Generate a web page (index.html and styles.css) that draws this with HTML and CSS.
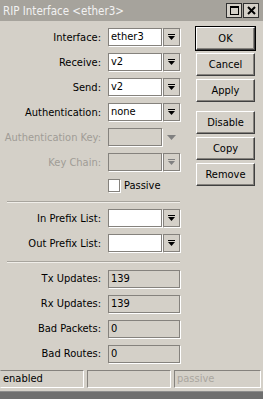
FILE: index.html
```html
<!DOCTYPE html>
<html lang="en">
<head>
    <meta charset="UTF-8">
    <title>RIP Interface</title>
    <link rel="stylesheet" href="styles.css">
</head>
<body>
    <div id="window">
        <div class="titlebar">
            <span class="title">RIP Interface &lt;ether3&gt;</span>
            <div class="tbButtons">
                <span class="tbBtn">
                    <svg width="9" height="9" viewBox="0 0 9 9"><path d="M0 0h9v9h-9z M1 2v6h7v-6z" fill="#000" fill-rule="evenodd"/></svg>
                </span>
                <span class="tbBtn">
                    <svg width="9" height="9" viewBox="0 0 9 9"><path d="M1 1l7 7M8 1l-7 7" stroke="#000" stroke-width="2"/></svg>
                </span>
            </div>
        </div>

        <div class="main">
            <div class="form">
                <div class="group">
                    <div class="row">
                        <span class="lbl">Interface:</span>
                        <div class="combo"><div class="field">ether3</div><div class="drop"><svg width="7" height="7" viewBox="0 0 7 7"><path d="M0 0h7v1h-7z M0 2h7l-3.5 4z"/></svg></div></div>
                    </div>
                    <div class="row">
                        <span class="lbl">Receive:</span>
                        <div class="combo"><div class="field">v2</div><div class="drop"><svg width="7" height="7" viewBox="0 0 7 7"><path d="M0 0h7v1h-7z M0 2h7l-3.5 4z"/></svg></div></div>
                    </div>
                    <div class="row">
                        <span class="lbl">Send:</span>
                        <div class="combo"><div class="field">v2</div><div class="drop"><svg width="7" height="7" viewBox="0 0 7 7"><path d="M0 0h7v1h-7z M0 2h7l-3.5 4z"/></svg></div></div>
                    </div>
                    <div class="row">
                        <span class="lbl">Authentication:</span>
                        <div class="combo"><div class="field">none</div><div class="drop"><svg width="7" height="7" viewBox="0 0 7 7"><path d="M0 0h7v1h-7z M0 2h7l-3.5 4z"/></svg></div></div>
                    </div>
                    <div class="row">
                        <span class="lbl disabled">Authentication Key:</span>
                        <div class="combo"><div class="field off"></div><div class="drop flat"><svg width="9" height="5" viewBox="0 0 9 5"><path d="M0 0h9l-4.5 5z" fill="#808080"/></svg></div></div>
                    </div>
                    <div class="row">
                        <span class="lbl disabled">Key Chain:</span>
                        <div class="combo"><div class="field off"></div><div class="drop"><svg width="7" height="7" viewBox="0 0 7 7"><path d="M0 0h7v1h-7z M0 2h7l-3.5 4z" fill="#808080"/></svg></div></div>
                    </div>
                    <div class="checkRow">
                        <span class="check"></span>
                        <span>Passive</span>
                    </div>
                </div>

                <div class="sep"></div>

                <div class="group">
                    <div class="row">
                        <span class="lbl">In Prefix List:</span>
                        <div class="combo"><div class="field"></div><div class="drop"><svg width="7" height="7" viewBox="0 0 7 7"><path d="M0 0h7v1h-7z M0 2h7l-3.5 4z"/></svg></div></div>
                    </div>
                    <div class="row">
                        <span class="lbl">Out Prefix List:</span>
                        <div class="combo"><div class="field"></div><div class="drop"><svg width="7" height="7" viewBox="0 0 7 7"><path d="M0 0h7v1h-7z M0 2h7l-3.5 4z"/></svg></div></div>
                    </div>
                </div>

                <div class="sep"></div>

                <div class="group">
                    <div class="row">
                        <span class="lbl">Tx Updates:</span>
                        <div class="field ro">139</div>
                    </div>
                    <div class="row">
                        <span class="lbl">Rx Updates:</span>
                        <div class="field ro">139</div>
                    </div>
                    <div class="row">
                        <span class="lbl">Bad Packets:</span>
                        <div class="field ro">0</div>
                    </div>
                    <div class="row">
                        <span class="lbl">Bad Routes:</span>
                        <div class="field ro">0</div>
                    </div>
                </div>
            </div>

            <div class="buttons">
                <button class="btn default">OK</button>
                <button class="btn">Cancel</button>
                <button class="btn">Apply</button>
                <button class="btn spaced">Disable</button>
                <button class="btn">Copy</button>
                <button class="btn">Remove</button>
            </div>
        </div>

        <div class="status">
            <div class="cell first">enabled</div>
            <div class="cell"></div>
            <div class="cell dim">passive</div>
        </div>
        <div class="taskbar"></div>
    </div>
</body>
</html>
```

FILE: styles.css
```css
html, body {
    margin: 0;
    padding: 0;
    background-color: #d4d0c8;
}
#window {
    display: flex;
    flex-direction: column;
    width: 263px;
    height: 399px;
    font-family: "DejaVu Sans Condensed", "Liberation Sans", sans-serif;
    font-size: 11px;
    color: #000;
    overflow: hidden;
}
.titlebar {
    display: flex;
    align-items: center;
    justify-content: space-between;
    height: 21px;
    background-color: #a6a39c;
    padding: 0 4px 0 3px;
    box-sizing: border-box;
}
.title {
    color: #f2f2f2;
    font-size: 11.5px;
}
.tbButtons {
    display: flex;
    gap: 1px;
    margin-top: -1px;
}
.tbBtn {
    display: flex;
    align-items: center;
    justify-content: center;
    width: 14px;
    height: 13px;
    background-color: #d4d0c8;
    border: 1px solid #303030;
}
.main {
    display: flex;
    padding-top: 7px;
}
.form {
    display: flex;
    flex-direction: column;
    width: 180px;
}
.group {
    display: flex;
    flex-direction: column;
    gap: 6px;
}
.row {
    display: grid;
    grid-template-columns: 101px 72px;
    column-gap: 7px;
    align-items: center;
    height: 19px;
}
.lbl {
    text-align: right;
    white-space: nowrap;
}
.disabled {
    color: #a09c96;
}
.combo {
    display: flex;
    gap: 1px;
    height: 19px;
}
.field {
    box-sizing: border-box;
    height: 18px;
    width: 55px;
    background-color: #fff;
    border: 1px solid #85827d;
    box-shadow: 1px 1px 0 #fff;
    padding-left: 2px;
    line-height: 16px;
}
.field.off {
    background-color: #d4d0c8;
}
.field.ro {
    width: 72px;
    background-color: #d4d0c8;
}
.drop {
    display: flex;
    align-items: center;
    justify-content: center;
    box-sizing: border-box;
    width: 17px;
    height: 18px;
    border: 1px solid #85827d;
    box-shadow: 1px 1px 0 #fff;
}
.drop.flat {
    border-color: transparent;
    box-shadow: none;
}
.checkRow {
    display: flex;
    align-items: center;
    gap: 4px;
    height: 15px;
    padding-left: 108px;
}
.check {
    box-sizing: border-box;
    width: 12px;
    height: 13px;
    background-color: #fff;
    border: 1px solid #85827d;
    box-shadow: 1px 1px 0 #fff;
}
.sep {
    margin: 8px 0 6px 7px;
    height: 1px;
    background-color: #a8a59e;
    border-bottom: 1px solid #f0eee9;
}
.buttons {
    display: flex;
    flex-direction: column;
    gap: 3px;
    margin-left: 16px;
    margin-top: -1px;
}
.btn {
    box-sizing: border-box;
    width: 59px;
    height: 23px;
    padding: 0;
    font-family: inherit;
    font-size: 11px;
    color: #000;
    background-color: #d4d0c8;
    border: 1px solid;
    border-color: #fff #404040 #404040 #fff;
    box-shadow: inset -1px -1px 0 #85827d;
}
.btn.default {
    outline: 1px solid #000;
    outline-offset: 0;
    border-color: #fff #404040 #404040 #fff;
}
.btn.spaced {
    margin-top: 6px;
}
.status {
    display: flex;
    gap: 3px;
    margin-top: 7px;
    height: 18px;
}
.cell {
    box-sizing: border-box;
    width: 84px;
    height: 18px;
    border: 1px solid;
    border-color: #85827d #fff #fff #85827d;
    padding-left: 2px;
    line-height: 16px;
}
.cell.first {
    border-left-color: #d4d0c8;
}
.cell.dim {
    width: 87px;
    color: #aaa69f;
}
.taskbar {
    margin-top: 3px;
    flex: 1;
    background-color: #6f6f6f;
    border-top: 1px solid #8c8c8c;
}
```
